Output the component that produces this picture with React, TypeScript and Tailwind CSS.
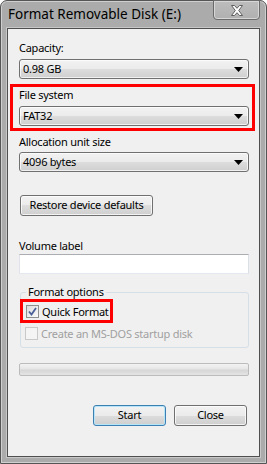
import React from 'react';

const font = { fontFamily: '"Noto Sans", "Open Sans", sans-serif' };

const Arrow = () => (
  <svg width="9" height="5" viewBox="0 0 9 5" className="shrink-0">
    <path d="M0 0 H9 L4.5 5 Z" fill="#000" />
  </svg>
);

const Combo: React.FC<{ value: string }> = ({ value }) => (
  <div className="flex h-[20px] w-[230px] items-center justify-between rounded-[3px] border border-[#707070] bg-[linear-gradient(#f2f2f2,#ebebeb_50%,#dddddd_50%,#cfcfcf)] pl-[3px] pr-[5px] text-[11px] tracking-[-0.25px] text-black shadow-[inset_0_0_0_1px_rgba(255,255,255,0.7)]">
    <span>{value}</span>
    <Arrow />
  </div>
);

const Label: React.FC<{ children: React.ReactNode }> = ({ children }) => (
  <div className="h-[15px] whitespace-nowrap text-[11px] leading-[15px] tracking-[-0.25px] text-black">{children}</div>
);

const Button: React.FC<{ children: React.ReactNode; className?: string }> = ({ children, className = '' }) => (
  <button
    className={`flex h-[21px] items-center justify-center rounded-[3px] border bg-[linear-gradient(#f2f2f2,#ebebeb_50%,#dddddd_50%,#cfcfcf)] text-[11px] tracking-[-0.25px] text-black ${className}`}
  >
    {children}
  </button>
);

const Checkbox: React.FC<{ checked?: boolean; disabled?: boolean }> = ({ checked, disabled }) => (
  <div
    className={`flex h-[13px] w-[13px] shrink-0 items-center justify-center border ${
      disabled ? 'border-[#c9c9c9] bg-[#f4f4f4]' : 'border-[#8e8f8f] bg-[linear-gradient(135deg,#dcdcdc,#fbfbfb)]'
    }`}
  >
    {checked && (
      <svg width="9" height="9" viewBox="0 0 9 9">
        <path d="M1 4.5 L3.5 7.5 L8 1" fill="none" stroke="#4a5f97" strokeWidth="1.8" />
      </svg>
    )}
  </div>
);

export default function App() {
  return (
    <div
      className="relative flex h-[464px] w-[267px] flex-col rounded-t-[7px] border border-[#555555] bg-[#ababab] shadow-[inset_0_0_0_1px_#cfcfcf]"
      style={font}
    >
      {/* title bar */}
      <div className="flex h-[27px] items-start justify-between">
        <div className="pl-[7px] pt-[4px] text-[13.5px] leading-[18px] text-black">Format Removable Disk (E:)</div>
        <div className="mr-[6px] mt-[-1px] flex h-[20px] w-[47px] items-center justify-center rounded-b-[4px] border border-[#6b6b6b] bg-[linear-gradient(#bdbdbd,#b0b0b0)] shadow-[inset_0_0_0_1px_#d6d6d6]">
          <svg width="14" height="11" viewBox="0 0 14 11">
            <path
              d="M1.5 0.5 H4.5 L7 3.3 L9.5 0.5 H12.5 L8.7 5.5 L12.5 10.5 H9.5 L7 7.7 L4.5 10.5 H1.5 L5.3 5.5 Z"
              fill="#ffffff"
              stroke="#5f5f5f"
              strokeWidth="1"
              strokeLinejoin="round"
            />
          </svg>
        </div>
      </div>

      {/* client area */}
      <div className="mx-[6px] mb-[6px] flex flex-1 flex-col border border-[#4f4f4f] bg-[#f0f0f0] pl-[11px] shadow-[0_0_0_1px_#c8c8c8]">
        <div className="mt-[11px]">
          <Label>Capacity:</Label>
        </div>
        <div className="mt-[4px]">
          <Combo value="0.98 GB" />
        </div>

        <div className="ml-[-9px] mt-[5px] w-[245px] border-[3px] border-[#ff0000] pb-[2px] pl-[6px]">
          <Label>File system</Label>
          <div className="mt-[4px]">
            <Combo value="FAT32" />
          </div>
        </div>

        <div className="mt-[3px]">
          <Label>Allocation unit size</Label>
        </div>
        <div className="mt-[3px]">
          <Combo value="4096 bytes" />
        </div>

        <div className="mt-[23px] ml-[1px]">
          <Button className="w-[133px] border-[#707070] shadow-[inset_0_0_0_1px_rgba(255,255,255,0.75)]">
            Restore device defaults
          </Button>
        </div>

        <div className="mt-[22px]">
          <Label>Volume label</Label>
        </div>
        <div className="mt-[1px] h-[20px] w-[230px] border border-[#abadb3] border-l-[#e2e3ea] border-r-[#dbdfe6] border-b-[#e3e9ef] bg-white" />

        {/* format options group */}
        <div className="relative ml-[1px] mt-[18px] h-[56px] w-[229px] rounded-[3px] border border-[#d5dfe5]">
          <div className="absolute left-[5px] top-[-9px] whitespace-nowrap bg-[#f0f0f0] px-[2px] text-[11px] leading-[15px] tracking-[-0.25px] text-black">
            Format options
          </div>
          <div className="ml-[-1px] mt-[6px] flex h-[24px] w-[93px] items-center border-[3px] border-[#ff0000] pl-[3px]">
            <Checkbox checked />
            <span className="ml-[3px] whitespace-nowrap text-[11px] leading-[15px] tracking-[-0.25px] text-black">Quick Format</span>
          </div>
          <div className="mt-[3px] flex items-center pl-[4px]">
            <Checkbox disabled />
            <span className="ml-[3px] whitespace-nowrap text-[11px] leading-[15px] tracking-[-0.25px] text-[#a0a0a0]">
              Create an MS-DOS startup disk
            </span>
          </div>
        </div>

        {/* progress bar */}
        <div className="mt-[15px] h-[13px] w-[230px] rounded-[2px] border border-[#bcbcbc] bg-[linear-gradient(#f3f3f3,#e6e6e6_45%,#d6d6d6_55%,#e4e4e4)]" />

        <div className="mt-[29px] flex w-[228px] justify-end gap-[8px]">
          <Button className="w-[73px] border-[#3c7fb1] shadow-[inset_0_0_0_1px_#b6e4f8]">Start</Button>
          <Button className="w-[73px] border-[#707070] shadow-[inset_0_0_0_1px_rgba(255,255,255,0.75)]">Close</Button>
        </div>
      </div>
    </div>
  );
}
